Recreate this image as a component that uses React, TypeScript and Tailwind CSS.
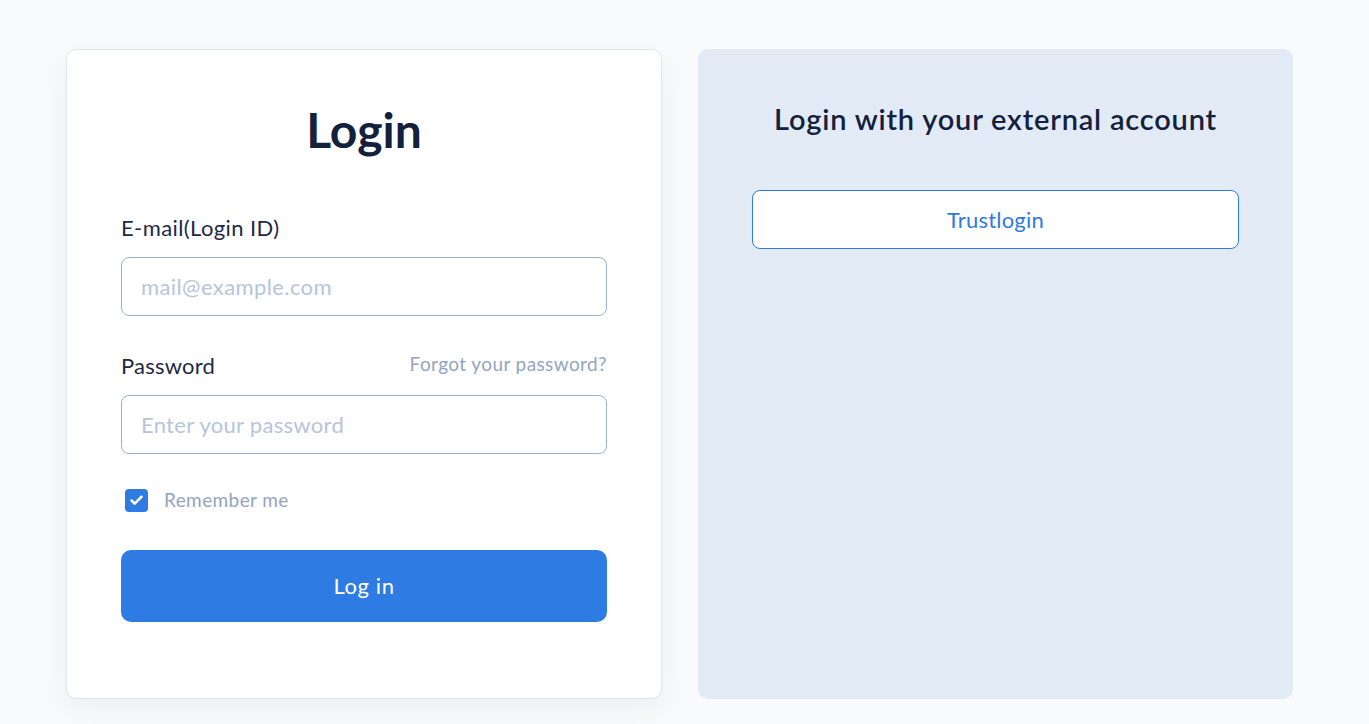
import { Check } from 'lucide-react'

function App() {
  return (
    <div className="min-h-screen bg-[#f8fafc] font-['Lato',sans-serif]">
      <div className="flex gap-[36px] pl-[66px] pt-[49px]">
        {/* 로그인 폼 */}
        <div className="w-[596px] h-[650px] bg-white border border-[#dfe5ee] rounded-[10px] shadow-[0_10px_30px_rgba(15,23,42,0.05)] px-[54px] pt-[48px]">
          <h1 className="text-center text-[48px] font-bold text-[#14213d] leading-[64px]">
            Login
          </h1>
          <div className="mt-[52px]">
            <label className="block text-[22px] tracking-[0.4px] text-[#1e2a44] leading-[28px]">
              E-mail(Login ID)
            </label>
            <input
              type="text"
              placeholder="mail@example.com"
              className="mt-[15px] w-full h-[59px] border border-[#9fb0cc] rounded-[8px] px-[19px] text-[22px] tracking-[0.4px] placeholder:text-[#b7c4dc] outline-none"
            />
          </div>
          <div className="mt-[36px]">
            <div className="flex items-center justify-between">
              <label className="text-[22px] tracking-[0.2px] text-[#1e2a44] leading-[28px]">
                Password
              </label>
              <a className="text-[19px] tracking-[0.4px] text-[#94a4c0] leading-[26px] -mt-[4px]">
                Forgot your password?
              </a>
            </div>
            <input
              type="password"
              placeholder="Enter your password"
              className="mt-[15px] w-full h-[59px] border border-[#9fb0cc] rounded-[8px] px-[19px] text-[22px] tracking-[0.3px] placeholder:text-[#b7c4dc] outline-none"
            />
          </div>
          <div className="flex items-center gap-[16px] mt-[32px] pl-[4px]">
            <span className="w-[23px] h-[23px] rounded-[4px] bg-[#2d7be3] flex items-center justify-center">
              <Check className="w-[15px] h-[15px] text-white" strokeWidth={4} />
            </span>
            <span className="text-[19px] tracking-[0.4px] text-[#94a4c0]">Remember me</span>
          </div>
          <button className="mt-[35px] w-full h-[72px] rounded-[10px] bg-[#2d7be3] text-white text-[22px] tracking-[0.6px]">
            Log in
          </button>
        </div>

        {/* 외부 계정 로그인 */}
        <div className="w-[595px] h-[650px] bg-[#e2eaf5] rounded-[10px] px-[54px] pt-[50px]">
          <h2 className="text-center text-[29px] font-semibold tracking-[0.8px] text-[#14213d] leading-[40px]">
            Login with your external account
          </h2>
          <button className="mt-[51px] w-full h-[59px] bg-white border border-[#2d7be3] rounded-[8px] text-[#2d7be3] text-[22px] tracking-[0.2px]">
            Trustlogin
          </button>
        </div>
      </div>
    </div>
  )
}

export default App
